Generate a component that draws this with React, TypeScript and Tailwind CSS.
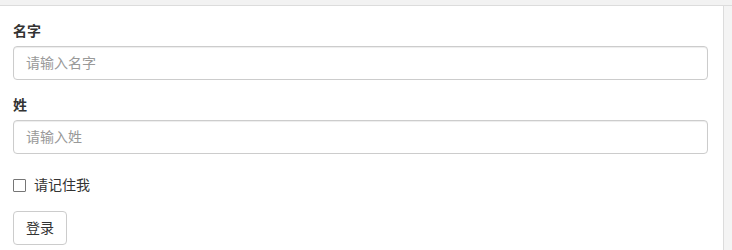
import React from "react"

export default function App() {
  return (
    <div
      className="w-[732px] h-[250px] overflow-hidden bg-white flex flex-col text-[14px] text-[#333]"
      style={{ fontFamily: '"Liberation Sans", "Noto Sans CJK SC", sans-serif' }}
    >
      <div className="h-[6px] shrink-0 bg-[#f2f2f2] border-b border-[#dcdcdc]" />
      <div className="flex flex-1 min-h-0">
        <form className="flex-1 pl-[13px] pr-[15px] pt-[15px]">
          <div className="mb-[15px]">
            <label className="block font-bold leading-5 mb-[5px]">名字</label>
            <input
              type="text"
              placeholder="请输入名字"
              className="block w-full h-[34px] px-3 border border-[#ccc] rounded-[4px] leading-5 placeholder:text-[#999] outline-none shadow-[inset_0_1px_1px_rgba(0,0,0,0.075)]"
            />
          </div>
          <div className="mb-[15px]">
            <label className="block font-bold leading-5 mb-[5px]">姓</label>
            <input
              type="text"
              placeholder="请输入姓"
              className="block w-full h-[34px] px-3 border border-[#ccc] rounded-[4px] leading-5 placeholder:text-[#999] outline-none shadow-[inset_0_1px_1px_rgba(0,0,0,0.075)]"
            />
          </div>
          <div className="mt-[21px] mb-[16px]">
            <label className="flex items-center gap-[8px] leading-5 min-h-5">
              <span className="w-[13px] h-[13px] border border-[#767676] rounded-[1px] bg-white" />
              请记住我
            </label>
          </div>
          <button
            type="button"
            className="h-[34px] px-3 border border-[#ccc] rounded-[4px] bg-white leading-5 text-[#333]"
          >
            登录
          </button>
        </form>
        <div className="w-[9px] shrink-0 bg-[#f4f4f4] border-l border-[#dcdcdc]" />
      </div>
    </div>
  )
}
